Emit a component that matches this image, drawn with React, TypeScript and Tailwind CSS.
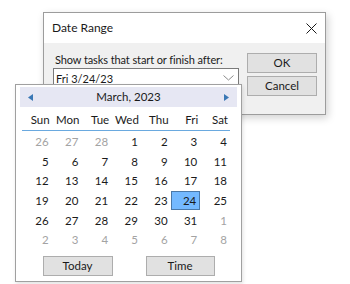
import React from "react";

const prev = [26, 27, 28];
const next1 = [1];
const next2 = [2, 3, 4, 5, 6, 7, 8];

type Cell = { d: number; muted: boolean; sel?: boolean };

function buildCells(): Cell[] {
  const cells: Cell[] = [];
  prev.forEach((d) => cells.push({ d, muted: true }));
  for (let d = 1; d <= 31; d++) cells.push({ d, muted: false, sel: d === 24 });
  next1.forEach((d) => cells.push({ d, muted: true }));
  next2.forEach((d) => cells.push({ d, muted: true }));
  return cells;
}

const days = ["Sun", "Mon", "Tue", "Wed", "Thu", "Fri", "Sat"];

export default function App() {
  const cells = buildCells();
  return (
    <div
      className="relative w-[350px] h-[284px] bg-white overflow-hidden text-[11.5px] text-[#1a1a1a]"
      style={{ fontFamily: 'Lato, "Noto Sans", sans-serif' }}
    >
      {/* Dialog window */}
      <div className="absolute left-[43px] top-[12px] w-[283px] h-[103px] border border-[#9c9c9c] bg-[#f0f0f0] shadow-[2px_3px_8px_rgba(0,0,0,0.18)] flex flex-col">
        <div className="h-[30px] bg-white flex items-center justify-between pl-[8px] pr-[8px]">
          <span className="text-[12px] leading-none">Date Range</span>
          <svg width="11" height="11" viewBox="0 0 11 11">
            <path d="M0.5 0.5 L10.5 10.5 M10.5 0.5 L0.5 10.5" stroke="#1a1a1a" strokeWidth="1" />
          </svg>
        </div>
        <div className="flex pl-[9px] pt-[9px]">
          <div className="flex flex-col w-[186px]">
            <span className="text-[11px] tracking-[-0.1px] leading-[15px] pl-[2px] whitespace-nowrap">Show tasks that start or finish after:</span>
            <div className="mt-[1px] h-[20px] bg-white border border-[#7a7a7a] flex items-center justify-between pl-[2px] pr-[4px]">
              <span className="text-[11px] leading-none">Fri 3/24/23</span>
              <svg width="11" height="6" viewBox="0 0 11 6">
                <path d="M0.5 0.5 L5.5 5 L10.5 0.5" stroke="#8a8a8a" strokeWidth="1" fill="none" />
              </svg>
            </div>
          </div>
          <div className="flex flex-col ml-[8px] gap-[3px] mt-[1px]">
            <button className="w-[70px] h-[20px] bg-[#e1e1e1] border border-[#adadad] leading-none">OK</button>
            <button className="w-[70px] h-[20px] bg-[#e1e1e1] border border-[#adadad] leading-none">Cancel</button>
          </div>
        </div>
      </div>

      {/* Calendar popup */}
      <div className="absolute left-[15px] top-[84px] w-[227px] h-[198px] bg-white border border-[#a0a0a0] shadow-[1px_2px_4px_rgba(0,0,0,0.12)] flex flex-col">
        <div className="mx-[4px] mt-[2px] h-[20px] bg-[#e6e7f3] flex items-center justify-between px-[8px]">
          <svg width="5" height="7" viewBox="0 0 5 7">
            <path d="M0 3.5 L5 0 L5 7 Z" fill="#3a78b5" />
          </svg>
          <span className="leading-none">March, 2023</span>
          <svg width="5" height="7" viewBox="0 0 5 7">
            <path d="M5 3.5 L0 0 L0 7 Z" fill="#3a78b5" />
          </svg>
        </div>
        <div className="ml-[6px] w-[208px] mt-[6px] grid grid-cols-7 h-[18px] border-b border-[#6aa9df] items-start">
          {days.map((d) => (
            <div key={d} className="text-right pr-[2px] leading-[14px]">
              {d}
            </div>
          ))}
        </div>
        <div className="ml-[6px] w-[208px] mt-[1px] grid grid-cols-7 auto-rows-[19.6px]">
          {cells.map((c, i) => (
            <div
              key={i}
              className={
                "flex items-center justify-end pr-[3px] " +
                (c.sel ? "bg-[#74b9ff] border border-[#4a78a8] " : "") +
                (c.muted ? "text-[#a3a3a3]" : "text-[#1a1a1a]")
              }
            >
              {c.d}
            </div>
          ))}
        </div>
        <div className="flex justify-center gap-[33px] mt-[6px]">
          <button className="w-[70px] h-[20px] bg-[#e1e1e1] border border-[#adadad] leading-none">Today</button>
          <button className="w-[69px] h-[20px] bg-[#e1e1e1] border border-[#adadad] leading-none">Time</button>
        </div>
      </div>
    </div>
  );
}
